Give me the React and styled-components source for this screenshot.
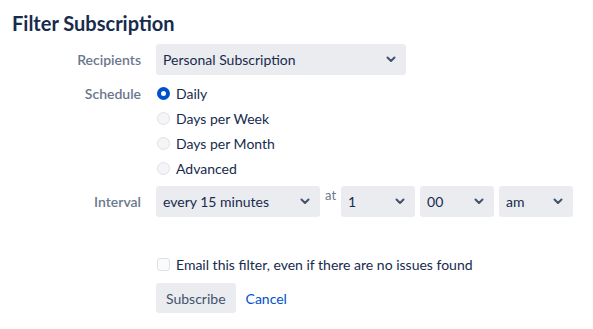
import React from 'react'
import styled, { createGlobalStyle } from 'styled-components'

const GlobalStyle = createGlobalStyle`
  body {
    margin: 0;
    background: #fff;
    font-family: "Segoe UI", Lato, "Noto Sans", sans-serif;
    color: #172b4d;
  }
`;

const Page = styled.div`
  padding: 12px 12px 0 12px;
  width: 593px;
  box-sizing: border-box;
`;

const Title = styled.h2`
  margin: 0 0 10px 0;
  font-size: 20px;
  font-weight: 700;
  line-height: 22px;
  color: #172b4d;
`;

const Field = styled.div`
  display: grid;
  grid-template-columns: 129px 1fr;
  column-gap: 15px;
  align-items: ${p => (p.top ? 'start' : 'center')};
  margin-top: ${p => p.mt || 0}px;
`;

const Label = styled.div`
  text-align: right;
  font-size: 14px;
  font-weight: 600;
  color: #6b778c;
  line-height: ${p => p.lh || 20}px;
`;

const SelectBox = styled.div`
  display: flex;
  align-items: center;
  justify-content: space-between;
  width: ${p => p.w}px;
  height: 31px;
  box-sizing: border-box;
  padding: 0 10px 0 7px;
  background: #ebecf0;
  border-radius: 3px;
  font-size: 14px;
  color: #172b4d;
`;

const Chevron = () => (
  <svg width="10" height="7" viewBox="0 0 10 7">
    <path d="M1.5 1.5 L5 5 L8.5 1.5" fill="none" stroke="#42526e" strokeWidth="2" strokeLinecap="round" strokeLinejoin="round" />
  </svg>
);

const Select = ({ w, children }) => (
  <SelectBox w={w}>
    <span>{children}</span>
    <Chevron />
  </SelectBox>
);

const Options = styled.div`
  display: flex;
  flex-direction: column;
`;

const OptionRow = styled.label`
  display: flex;
  align-items: center;
  gap: 7px;
  height: 25px;
  font-size: 14px;
  color: #172b4d;
`;

const Radio = styled.span`
  width: 13px;
  height: 13px;
  box-sizing: border-box;
  border-radius: 50%;
  margin-left: 1px;
  margin-right: -1px;
  background: ${p => (p.on ? '#fff' : '#f4f5f7')};
  border: ${p => (p.on ? '4px solid #0052cc' : '1.5px solid #dfe1e6')};
`;

const Inline = styled.div`
  display: flex;
  align-items: center;
  gap: 5px;
`;

const At = styled.span`
  align-self: flex-start;
  font-size: 13px;
  color: #6b778c;
  line-height: 16px;
  margin-top: 1px;
`;

const CheckBox = styled.span`
  width: 13px;
  height: 13px;
  box-sizing: border-box;
  border-radius: 3px;
  margin-left: 1px;
  margin-right: -1px;
  background: #fafbfc;
  border: 1.5px solid #dfe1e6;
`;

const Actions = styled.div`
  display: flex;
  align-items: center;
  gap: 10px;
  margin-top: 6px;
`;

const Button = styled.button`
  height: 30px;
  padding: 0 10px;
  border: none;
  border-radius: 3px;
  background: #ebecf0;
  color: #42526e;
  font-family: inherit;
  font-size: 14px;
`;

const LinkButton = styled.a`
  font-size: 14px;
  color: #0052cc;
  text-decoration: none;
`;

export default function App() {
  return (
    <Page>
      <GlobalStyle />
      <Title>Filter Subscription</Title>
      <Field>
        <Label>Recipients</Label>
        <Select w={250}>Personal Subscription</Select>
      </Field>
      <Field top mt={6}>
        <Label lh={25}>Schedule</Label>
        <Options>
          <OptionRow><Radio on /> Daily</OptionRow>
          <OptionRow><Radio /> Days per Week</OptionRow>
          <OptionRow><Radio /> Days per Month</OptionRow>
          <OptionRow><Radio /> Advanced</OptionRow>
        </Options>
      </Field>
      <Field mt={5}>
        <Label>Interval</Label>
        <Inline>
          <Select w={164}>every 15 minutes</Select>
          <At>at</At>
          <Select w={74}>1</Select>
          <Select w={74}>00</Select>
          <Select w={74}>am</Select>
        </Inline>
      </Field>
      <Field mt={35}>
        <div />
        <div>
          <OptionRow><CheckBox /> Email this filter, even if there are no issues found</OptionRow>
          <Actions>
            <Button>Subscribe</Button>
            <LinkButton href="#">Cancel</LinkButton>
          </Actions>
        </div>
      </Field>
    </Page>
  );
}
